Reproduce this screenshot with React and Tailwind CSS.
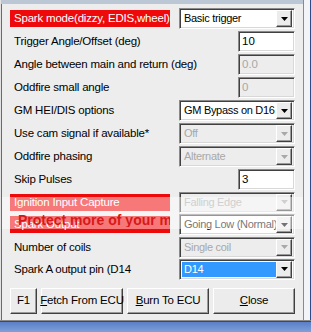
import React from "react";

const font = { fontFamily: '"Liberation Sans", Arial, sans-serif' };

function Label({ children, red }) {
  return (
    <div className="h-full flex items-center">
      <span
        className={`text-[11.5px] tracking-[-0.2px] whitespace-nowrap leading-[17px] pl-[4px] ${red ? "bg-[#ee0a0a] text-white w-[160px]" : "text-black"}`}
      >
        {children}
      </span>
    </div>
  );
}

function Sunken({ className = "", children }) {
  return (
    <div
      className={`border border-t-[#8a8a8a] border-l-[#8a8a8a] border-b-white border-r-white shadow-[inset_1px_1px_0_#404040,inset_-1px_-1px_0_#d8d8d8] ${className}`}
    >
      {children}
    </div>
  );
}

function TextBox({ value, disabled }) {
  return (
    <Sunken className={`w-[57px] h-[21px] flex items-center pl-[3px] ${disabled ? "bg-[#ededed] text-[#a8a8a8]" : "bg-white text-black"}`}>
      <span className="text-[11.5px] leading-none">{value}</span>
    </Sunken>
  );
}

function Arrow({ disabled }) {
  return (
    <div className="w-[16px] h-[17px] shrink-0 bg-[#ececec] border border-t-white border-l-white border-b-[#404040] border-r-[#404040] shadow-[inset_-1px_-1px_0_#9a9a9a] flex items-center justify-center">
      <svg width="7" height="4" viewBox="0 0 7 4">
        <polygon points="0,0 7,0 3.5,4" fill={disabled ? "#a8a8a8" : "#000"} />
      </svg>
    </div>
  );
}

function Combo({ value, disabled, selected }) {
  return (
    <Sunken className={`w-[116px] h-[21px] flex items-center p-[2px] ${disabled ? "bg-[#ededed]" : "bg-white"}`}>
      <div className="flex-1 min-w-0 h-full flex items-center overflow-hidden">
        <span
          className={`text-[11px] tracking-[-0.3px] whitespace-nowrap leading-[15px] h-[15px] flex items-center px-[2px] ${
            selected
              ? "bg-[#3399ff] text-white w-full outline outline-1 outline-dotted outline-[#223]"
              : disabled
              ? "text-[#a8a8a8]"
              : "text-black"
          }`}
        >
          {value}
        </span>
      </div>
      <Arrow disabled={disabled} />
    </Sunken>
  );
}

function Row({ label, red, children, h = "h-[23px]" }) {
  return (
    <div className={`flex items-center justify-between ${h}`}>
      <Label red={red}>{label}</Label>
      <div className="flex items-center">{children}</div>
    </div>
  );
}

function Btn({ children, w }) {
  return (
    <div
      className={`${w} h-[26px] bg-[#ececec] border border-t-white border-l-white border-b-[#404040] border-r-[#404040] shadow-[inset_-1px_-1px_0_#9a9a9a] flex items-center justify-center text-[11.5px] tracking-[-0.2px] whitespace-nowrap text-black`}
    >
      {children}
    </div>
  );
}

export default function App() {
  return (
    <div style={font} className="w-[311px] h-[332px] overflow-hidden bg-[#dfe4ec] relative flex flex-col">
      <div className="flex flex-1">
        <div className="w-[3px] bg-[#e2e2e2]" />
        <div className="flex-1 flex flex-col">
          <div className="h-[4px] bg-[#bcc7d6]" />
          <div className="flex-1 bg-[#ededed] border-l border-[#6a6a6a] relative px-[8px] pt-[3px]">
            <Row label="Spark mode(dizzy, EDIS,wheel)" red>
              <Combo value="Basic trigger" />
            </Row>
            <Row label="Trigger Angle/Offset (deg)">
              <TextBox value="10" />
            </Row>
            <Row label="Angle between main and return (deg)">
              <TextBox value="0.0" disabled />
            </Row>
            <Row label="Oddfire small angle">
              <TextBox value="0" disabled />
            </Row>
            <Row label="GM HEI/DIS options">
              <Combo value="GM Bypass on D16" />
            </Row>
            <Row label="Use cam signal if available*">
              <Combo value="Off" disabled />
            </Row>
            <Row label="Oddfire phasing">
              <Combo value="Alternate" disabled />
            </Row>
            <Row label="Skip Pulses">
              <TextBox value="3" />
            </Row>
            <Row label="Ignition Input Capture" red h="h-[22px]">
              <Combo value="Falling Edge" disabled />
            </Row>
            <Row label="Spark Output" red>
              <Combo value="Going Low (Normal)" />
            </Row>
            <Row label="Number of coils" h="h-[22px]">
              <Combo value="Single coil" disabled />
            </Row>
            <Row label="Spark A output pin (D14" h="h-[22px]">
              <Combo value="D14" selected />
            </Row>
            <div className="flex gap-[4px] mt-[8px]">
              <Btn w="w-[27px]">F1</Btn>
              <Btn w="w-[82px]">
                <span><u>F</u>etch From ECU</span>
              </Btn>
              <Btn w="w-[82px]">
                <span><u>B</u>urn To ECU</span>
              </Btn>
              <Btn w="w-[82px]">
                <span><u>C</u>lose</span>
              </Btn>
            </div>
            {/* watermark band */}
            <div className="absolute left-0 right-0 top-[193px] h-[32px] bg-white/45" />
            <div className="absolute left-[16px] top-[209px] w-[152px] overflow-hidden whitespace-nowrap text-[14px] font-bold text-[#d81818] leading-none">
              Protect more of your memories
            </div>
          </div>
        </div>
        <div className="w-[14px] flex">
          <div className="w-[1px] bg-[#8a8a8a]" />
          <div className="w-[6px] bg-[#f2f4f7]" />
          <div className="w-[1px] bg-[#2e4a8a]" />
          <div className="flex-1 bg-[#c9d3e3]" />
        </div>
      </div>
      <div className="h-[12px] flex flex-col">
        <div className="h-[1px] bg-[#8a8a8a]" />
        <div className="h-[1px] bg-[#2e4a8a]" />
        <div className="flex-1 bg-gradient-to-b from-[#5a7fc8] to-[#7f9fd8]" />
      </div>
    </div>
  );
}
